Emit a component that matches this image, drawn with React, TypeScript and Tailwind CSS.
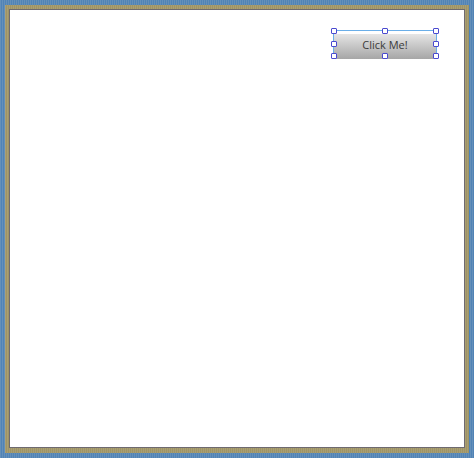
const handles = [
  "-top-[3px] -left-[3px]",
  "-top-[3px] left-1/2 -ml-[3px]",
  "-top-[3px] -right-[3px]",
  "top-1/2 -mt-[3px] -left-[3px]",
  "top-1/2 -mt-[3px] -right-[3px]",
  "-bottom-[3px] -left-[3px]",
  "-bottom-[3px] left-1/2 -ml-[3px]",
  "-bottom-[3px] -right-[3px]",
];

export default function App() {
  return (
    <div className="w-[474px] h-[458px] p-[5px] bg-[#5a88b8] bg-[repeating-linear-gradient(90deg,#6590ba_0px,#6590ba_1px,#5083b6_1px,#5083b6_2px)] font-['Open_Sans',sans-serif]">
      <div className="w-full h-full pt-[4px] pl-[4px] pr-[4px] pb-[5px] bg-[#a4996c] bg-[repeating-linear-gradient(90deg,#aa9e74_0px,#aa9e74_1px,#9e9464_1px,#9e9464_2px)]">
        <div className="w-full h-full bg-[#6e6a70] p-px">
          <div className="w-full h-full bg-white flex justify-end pt-[20px] pr-[27px]">
            <div className="relative w-[104px] h-[27px] border border-[#6aaee8]">
              <button className="w-full h-full pb-[4px] bg-gradient-to-b from-[#e6e6e6] to-[#a6a6a6] text-[11px] leading-none text-[#3a3a3a]">
                Click Me!
              </button>
              {handles.map((pos) => (
                <span
                  key={pos}
                  className={`absolute ${pos} w-[6px] h-[6px] rounded-[1px] bg-white border border-[#4a4ad0]`}
                />
              ))}
            </div>
          </div>
        </div>
      </div>
    </div>
  );
}
